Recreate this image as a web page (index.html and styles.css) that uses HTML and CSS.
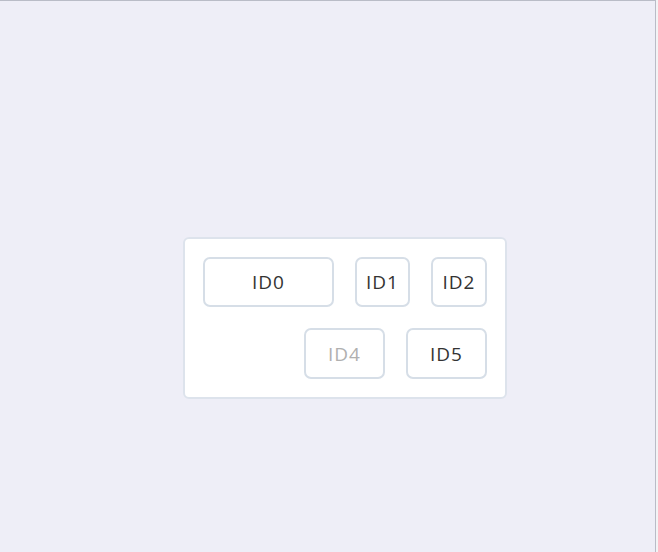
FILE: index.html
```html
<!DOCTYPE html>
<html lang="en">
<head>
  <meta charset="UTF-8">
  <meta name="viewport" content="width=device-width, initial-scale=1.0">
  <title>IDs</title>
  <link rel="stylesheet" href="styles.css">
</head>
<body>
  <div class="frame">
    <div class="card">
      <div class="chip wide">ID0</div>
      <div class="chip">ID1</div>
      <div class="chip last">ID2</div>
      <div class="chip mid disabled">ID4</div>
      <div class="chip mid">ID5</div>
    </div>
  </div>
</body>
</html>
```

FILE: styles.css
```css
/* Base styles */
html, body {
  margin: 0;
  padding: 0;
  height: 100%;
  background-color: #f3f3f5;
}

body {
  font-family: 'Open Sans', 'Noto Sans', sans-serif;
}

.frame {
  box-sizing: border-box;
  width: 656px;
  height: 552px;
  background-color: #eeeef7;
  border-top: 1px solid #b9bcc7;
  border-right: 1px solid #b9bcc7;
  display: flex;
  align-items: flex-start;
  padding: 236px 0 0 183px;
}

/* Card holding the chips */
.card {
  box-sizing: border-box;
  width: 324px;
  background-color: #fff;
  border: 2px solid #dde3ec;
  border-radius: 6px;
  padding: 18px;
  display: flex;
  flex-wrap: wrap;
  justify-content: flex-end;
  gap: 21px;
}

.chip {
  box-sizing: border-box;
  width: 55px;
  height: 50px;
  border: 2px solid #d6dee7;
  border-radius: 7px;
  display: flex;
  align-items: center;
  justify-content: center;
  font-size: 19px;
  font-weight: 500;
  color: #333;
  letter-spacing: 1px;
}

.chip.wide {
  width: 131px;
}

.chip.last {
  width: 56px;
}

.chip.mid {
  width: 81px;
  height: 51px;
}

.chip.disabled {
  color: #b0b0b0;
}
```
